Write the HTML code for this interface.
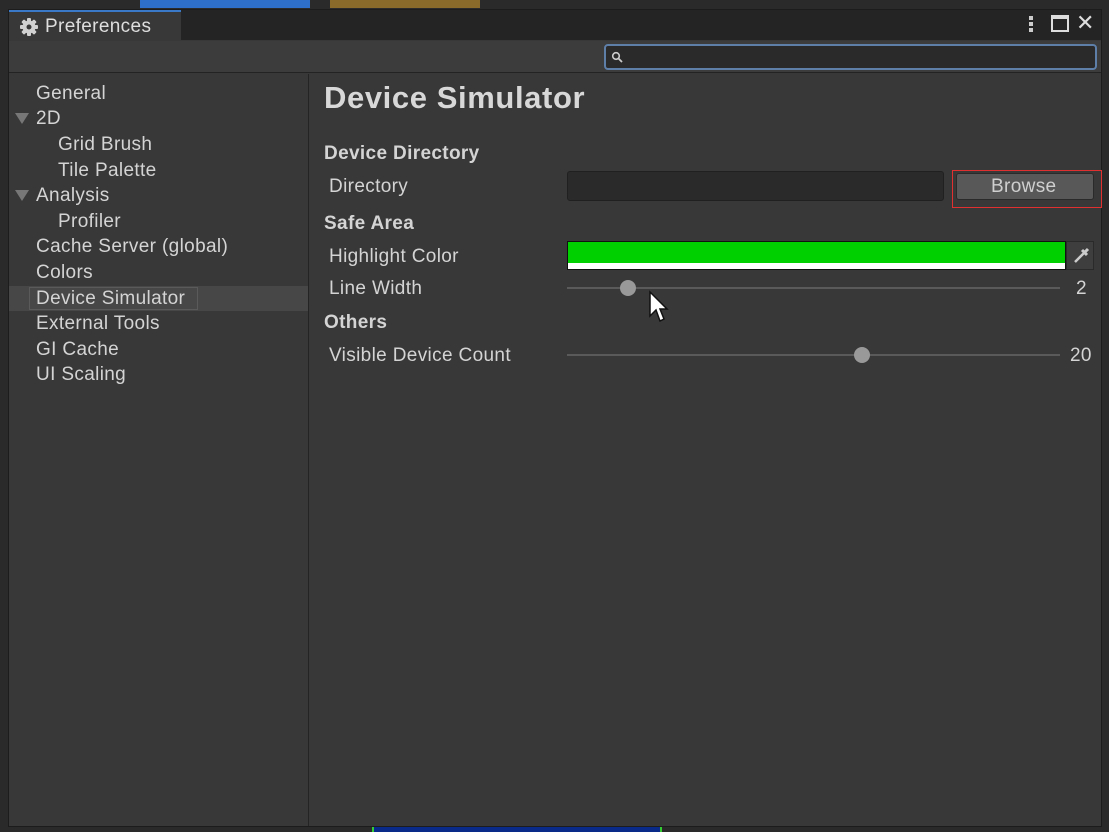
<!DOCTYPE html>
<html><head><meta charset="utf-8"><style>
*{margin:0;padding:0;box-sizing:border-box}
body{width:1109px;height:832px;background:#2a2a2a;position:relative;overflow:hidden;font-family:"Liberation Sans",sans-serif;color:#d2d2d2}
.abs{position:absolute}
.t{position:absolute;font-size:19px;letter-spacing:0.35px;white-space:nowrap;color:#d4d4d4}
</style></head><body>
<div class="abs" style="left:140px;top:0;width:170px;height:8px;background:#2d6fc9"></div>
<div class="abs" style="left:330px;top:0;width:150px;height:8px;background:#8a6a2a"></div>
<div class="abs" style="left:372px;top:820px;width:290px;height:12px;background:#0a2a8a;border-left:2px solid #3c3;border-right:2px solid #3c3"></div>
<div class="abs" style="left:8px;top:9px;width:1094px;height:818px;background:#383838;border:1px solid #1c1c1c"></div>
<div class="abs" style="left:9px;top:10px;width:1092px;height:30px;background:#242424"></div>
<div class="abs" style="left:9px;top:10px;width:172px;height:31px;background:#383838;border-top:2px solid #3a78c8"></div>
<svg class="abs" style="left:19px;top:17px" width="20" height="20" viewBox="0 0 20 20"><g fill="#d0d0d0"><circle cx="10" cy="10" r="6.5"/><rect x="8" y="1" width="4" height="18" rx="1"/><rect x="1" y="8" width="18" height="4" rx="1"/><rect x="8" y="1" width="4" height="18" rx="1" transform="rotate(45 10 10)"/><rect x="8" y="1" width="4" height="18" rx="1" transform="rotate(-45 10 10)"/></g><circle cx="10" cy="10" r="2.5" fill="#383838"/></svg>
<div class="t" style="left:45px;top:16px;color:#dedede">Preferences</div>
<div class="abs" style="left:1029px;top:16px;width:4px;height:4px;background:#ccc;box-shadow:0 6px 0 #ccc,0 12px 0 #ccc"></div>
<div class="abs" style="left:1051px;top:15px;width:18px;height:17px;border:2px solid #ddd;border-top-width:4px"></div>
<div class="t" style="left:1076px;top:10px;font-size:22px;color:#ddd">✕</div>
<div class="abs" style="left:9px;top:41px;width:1092px;height:32px;background:#3c3c3c;border-bottom:1px solid #232323"></div>
<div class="abs" style="left:604px;top:44px;width:493px;height:26px;background:#2a2a2a;border:2px solid #5e7fa8;border-radius:4px"></div>
<svg class="abs" style="left:611px;top:51px" width="12" height="12"><circle cx="5" cy="5" r="3.3" stroke="#ccc" stroke-width="1.6" fill="none"/><line x1="7.5" y1="7.5" x2="11" y2="11" stroke="#ccc" stroke-width="1.8"/></svg>
<div class="abs" style="left:308px;top:74px;width:1px;height:752px;background:#242424"></div>
<div class="abs" style="left:9px;top:286px;width:299px;height:25px;background:#474747"></div>
<div class="abs" style="left:29px;top:287px;width:169px;height:23px;border:1px solid #5a5a5a"></div>
<div class="t" style="left:36px;top:83px">General</div>
<svg class="abs" style="left:15px;top:113px" width="14" height="12"><path d="M0 0H14L7 11Z" fill="#777"/></svg>
<div class="t" style="left:36px;top:108px">2D</div>
<div class="t" style="left:58px;top:134px">Grid Brush</div>
<div class="t" style="left:58px;top:160px">Tile Palette</div>
<svg class="abs" style="left:15px;top:190px" width="14" height="12"><path d="M0 0H14L7 11Z" fill="#777"/></svg>
<div class="t" style="left:36px;top:185px">Analysis</div>
<div class="t" style="left:58px;top:211px">Profiler</div>
<div class="t" style="left:36px;top:236px">Cache Server (global)</div>
<div class="t" style="left:36px;top:262px">Colors</div>
<div class="t" style="left:36px;top:288px">Device Simulator</div>
<div class="t" style="left:36px;top:313px">External Tools</div>
<div class="t" style="left:36px;top:339px">GI Cache</div>
<div class="t" style="left:36px;top:364px">UI Scaling</div>
<div class="t" style="left:324px;top:80px;font-size:31px;letter-spacing:0.6px;font-weight:bold;color:#d8d8d8">Device Simulator</div>
<div class="t" style="left:324px;top:143px;font-weight:bold">Device Directory</div>
<div class="t" style="left:329px;top:176px">Directory</div>
<div class="abs" style="left:567px;top:171px;width:377px;height:30px;background:#2a2a2a;border:1px solid #202020;border-radius:3px"></div>
<div class="abs" style="left:952px;top:170px;width:150px;height:38px;border:1px solid #e03030"></div>
<div class="abs" style="left:956px;top:173px;width:138px;height:27px;background:#585858;border-radius:3px;border:1px solid #2a2a2a"></div>
<div class="t" style="left:991px;top:176px;color:#cfcfcf">Browse</div>
<div class="t" style="left:324px;top:213px;font-weight:bold">Safe Area</div>
<div class="t" style="left:329px;top:246px">Highlight Color</div>
<div class="abs" style="left:567px;top:241px;width:499px;height:29px;background:#fff;border:1px solid #111"></div>
<div class="abs" style="left:568px;top:242px;width:497px;height:21px;background:#00d000"></div>
<div class="abs" style="left:1066px;top:241px;width:28px;height:29px;background:#3e3e3e;border:1px solid #2a2a2a"></div>
<svg class="abs" style="left:1071px;top:245px" width="20" height="20"><line x1="4" y1="17" x2="13" y2="8" stroke="#ccc" stroke-width="2.5"/><line x1="11" y1="5" x2="16" y2="10" stroke="#ccc" stroke-width="3"/><line x1="14" y1="7" x2="17" y2="4" stroke="#ccc" stroke-width="3"/></svg>
<div class="t" style="left:329px;top:278px">Line Width</div>
<div class="abs" style="left:567px;top:287px;width:493px;height:2px;background:#5a5a5a"></div>
<div class="abs" style="left:620px;top:280px;width:16px;height:16px;border-radius:50%;background:#999"></div>
<div class="t" style="left:1076px;top:278px">2</div>
<svg class="abs" style="left:648px;top:290px" width="22" height="34"><path d="M2 2 L2 26 L8 20 L12 31 L16 29 L12 19 L19 19 Z" fill="#fff" stroke="#111" stroke-width="1.5"/></svg>
<div class="t" style="left:324px;top:312px;font-weight:bold">Others</div>
<div class="t" style="left:329px;top:345px">Visible Device Count</div>
<div class="abs" style="left:567px;top:354px;width:493px;height:2px;background:#5a5a5a"></div>
<div class="abs" style="left:854px;top:347px;width:16px;height:16px;border-radius:50%;background:#999"></div>
<div class="t" style="left:1070px;top:345px">20</div>
</body></html>
